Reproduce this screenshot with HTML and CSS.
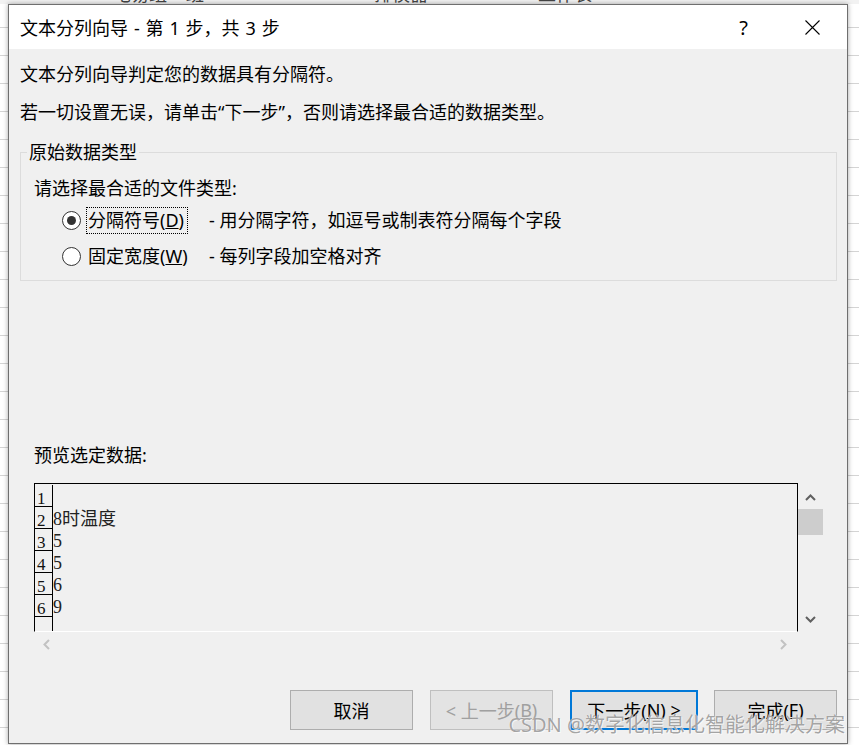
FILE: index.html
```html
<!DOCTYPE html>
<html lang="zh-CN">
<head>
<meta charset="utf-8">
<title>文本分列向导</title>
<link rel="stylesheet" href="styles.css">
</head>
<body>
<div class="sheet-top">
  <span class="hd hd1">电易组</span><span class="hd hd2">班</span><span class="hd hd3">排模器</span><span class="hd hd4">工作表</span>
</div>
<div class="stage">
  <div class="dialog">
    <div class="titlebar">
      <div class="title">文本分列向导 - 第 1 步，共 3 步</div>
      <div class="tb-btn help">?</div>
      <div class="tb-btn close">
        <svg width="15" height="15" viewBox="0 0 15 15"><path d="M0.5 0.5 L14.5 14.5 M14.5 0.5 L0.5 14.5" stroke="#000" stroke-width="1.1" fill="none"/></svg>
      </div>
    </div>
    <div class="content">
      <p class="line l1">文本分列向导判定您的数据具有分隔符。</p>
      <p class="line l2">若一切设置无误，请单击“下一步”，否则请选择最合适的数据类型。</p>
      <fieldset class="group">
        <legend>原始数据类型</legend>
        <div class="prompt">请选择最合适的文件类型:</div>
        <div class="options">
          <span class="radio checked"></span>
          <span class="opt-label focused">分隔符号(<u>D</u>)</span>
          <span class="opt-desc">- 用分隔字符，如逗号或制表符分隔每个字段</span>
          <span class="radio"></span>
          <span class="opt-label">固定宽度(<u>W</u>)</span>
          <span class="opt-desc">- 每列字段加空格对齐</span>
        </div>
      </fieldset>
      <div class="preview-label">预览选定数据:</div>
      <div class="preview">
        <div class="data">
          <div class="row"><div class="num">1</div><div class="cell"></div></div>
          <div class="row"><div class="num">2</div><div class="cell">8时温度</div></div>
          <div class="row"><div class="num">3</div><div class="cell">5</div></div>
          <div class="row"><div class="num">4</div><div class="cell">5</div></div>
          <div class="row"><div class="num">5</div><div class="cell">6</div></div>
          <div class="row"><div class="num">6</div><div class="cell">9</div></div>
          <div class="row tail"><div class="num"></div><div class="cell"></div></div>
        </div>
        <div class="vscroll">
          <div class="sb-btn up"><svg width="11" height="7" viewBox="0 0 11 7"><polyline points="1,6 5.5,1.5 10,6" fill="none" stroke="#606060" stroke-width="2"/></svg></div>
          <div class="thumb"></div>
          <div class="track"></div>
          <div class="sb-btn"><svg width="11" height="7" viewBox="0 0 11 7"><polyline points="1,1 5.5,5.5 10,1" fill="none" stroke="#606060" stroke-width="2"/></svg></div>
        </div>
        <div class="hscroll">
          <div class="hs-btn"><svg width="7" height="11" viewBox="0 0 7 11"><polyline points="6,1 1.5,5.5 6,10" fill="none" stroke="#c2c2c2" stroke-width="2"/></svg></div>
          <div class="hs-btn"><svg width="7" height="11" viewBox="0 0 7 11"><polyline points="1,1 5.5,5.5 1,10" fill="none" stroke="#c2c2c2" stroke-width="2"/></svg></div>
        </div>
      </div>
      <div class="buttons">
        <button class="btn">取消</button>
        <button class="btn disabled">&lt; 上一步(<u>B</u>)</button>
        <button class="btn primary">下一步(<u>N</u>) &gt;</button>
        <button class="btn finish">完成(<u>F</u>)</button>
      </div>
    </div>
    <div class="watermark">CSDN @数字化信息化智能化解决方案</div>
  </div>
</div>
</body>
</html>
```
FILE: styles.css
```css
* { box-sizing: border-box; }
html, body { margin: 0; padding: 0; }
body {
  width: 859px;
  height: 745px;
  overflow: hidden;
  background: #fff repeating-linear-gradient(to bottom, transparent 0 27px, #d4d4d4 27px 28px);
  font-family: "Noto Sans", "Noto Sans CJK SC", sans-serif;
  color: #000;
}
.sheet-top {
  height: 4px;
  overflow: hidden;
  background: #f2f2f2;
  display: flex;
}
.hd {
  font-size: 18px;
  line-height: 20px;
  margin-top: -16px;
  color: #444;
  white-space: nowrap;
}
.hd1 { margin-left: 113px; }
.hd2 { margin-left: 19px; }
.hd3 { margin-left: 170px; }
.hd4 { margin-left: 110px; }
.stage { padding-left: 8px; }
.dialog {
  position: relative;
  width: 840px;
  height: 740px;
  border: 1px solid #6f6f6f;
  background: #f0f0f0;
  box-shadow: 0 0 5px rgba(0, 0, 0, 0.35);
  display: flex;
  flex-direction: column;
}
.titlebar {
  height: 44px;
  flex: none;
  background: #fff;
  display: flex;
  align-items: center;
}
.title {
  flex: 1;
  font-size: 18px;
  padding-left: 11px;
  word-spacing: 1.2px;
  white-space: nowrap;
}
.tb-btn {
  width: 69px;
  height: 44px;
  display: flex;
  align-items: center;
  justify-content: center;
}
.help { font-size: 20px; }
.content {
  flex: 1;
  padding: 13px 10px 0 11px;
}
.line {
  margin: 0;
  font-size: 18px;
  line-height: 24px;
  white-space: nowrap;
}
.l2 { margin-top: 14px; }
.group {
  margin: 16px 0 0;
  padding: 12px 13px 6px;
  border: 1px solid #dcdcdc;
  min-width: 0;
}
.group legend {
  font-size: 18px;
  line-height: 24px;
  padding: 0 2px;
  margin-left: -7px;
}
.prompt {
  font-size: 18px;
  line-height: 24px;
}
.options {
  display: grid;
  grid-template-columns: 19px 118px auto;
  grid-auto-rows: 36px;
  column-gap: 5px;
  align-items: center;
  margin-top: 2px;
  padding-left: 28px;
  font-size: 18px;
}
.radio {
  width: 19px;
  height: 19px;
  border-radius: 50%;
  border: 1px solid #333;
  background: #fff;
  display: flex;
  align-items: center;
  justify-content: center;
}
.radio.checked::after {
  content: "";
  width: 9px;
  height: 9px;
  border-radius: 50%;
  background: #333;
}
.opt-label {
  justify-self: start;
  border: 1px dotted transparent;
  padding: 0 3px 0 1px;
  line-height: 25px;
  white-space: nowrap;
}
.opt-label.focused { border-color: #000; }
.opt-desc {
  line-height: 25px;
  white-space: nowrap;
}
.preview-label {
  margin-top: 162px;
  padding-left: 14px;
  font-size: 18px;
  line-height: 24px;
}
.preview {
  margin: 16px 0 0 14px;
  display: grid;
  grid-template-columns: 764px 25px;
  grid-template-rows: 149px 26px;
}
.data {
  border: 1px solid #000;
  border-bottom-color: #fff;
  overflow: hidden;
  padding-top: 1px;
  display: flex;
  flex-direction: column;
}
.row {
  display: flex;
  height: 22px;
  flex: none;
}
.row.tail { flex: 1; }
.num {
  width: 18px;
  flex: none;
  border-right: 1px solid #000;
  border-bottom: 1px solid #000;
  font-family: "Liberation Serif", serif;
  font-size: 17px;
  line-height: 12px;
  padding: 8px 0 0 2px;
  color: #111;
}
.row.tail .num { border-bottom: none; }
.cell {
  font-family: "Liberation Serif", "Noto Sans CJK SC", serif;
  font-size: 18px;
  line-height: 12px;
  padding-top: 6px;
  white-space: nowrap;
  color: #222;
}
.vscroll {
  display: flex;
  flex-direction: column;
}
.sb-btn {
  height: 26px;
  flex: none;
  display: flex;
  align-items: center;
  justify-content: center;
}
.sb-btn.up { padding-top: 2px; }
.thumb {
  height: 26px;
  flex: none;
  background: #cdcdcd;
}
.track { flex: 1; }
.hscroll {
  display: flex;
  justify-content: space-between;
  padding-right: 2px;
}
.hs-btn {
  width: 25px;
  display: flex;
  align-items: center;
  justify-content: center;
  padding-bottom: 1px;
}
.buttons {
  display: flex;
  justify-content: flex-end;
  margin-top: 32px;
}
.btn {
  width: 123px;
  height: 40px;
  margin: 0 0 0 17px;
  padding: 0;
  background: #e1e1e1;
  border: 1px solid #adadad;
  font-family: "Noto Sans", "Noto Sans CJK SC", sans-serif;
  font-size: 18px;
  color: #000;
  display: flex;
  align-items: center;
  justify-content: center;
}
.btn.disabled {
  color: #a0a0a0;
  border-color: #bfbfbf;
  background: #e3e3e3;
}
.btn.primary {
  width: 128px;
  border: 2px solid #0078d7;
}
.btn.finish { margin-left: 16px; }
.watermark {
  position: absolute;
  top: 706px;
  right: 2px;
  font-size: 20px;
  line-height: 28px;
  color: rgba(140, 140, 140, 0.8);
  text-shadow: 0 0 1px #fff, 1px 1px 0 rgba(255, 255, 255, 0.6);
  white-space: nowrap;
  pointer-events: none;
}
```
